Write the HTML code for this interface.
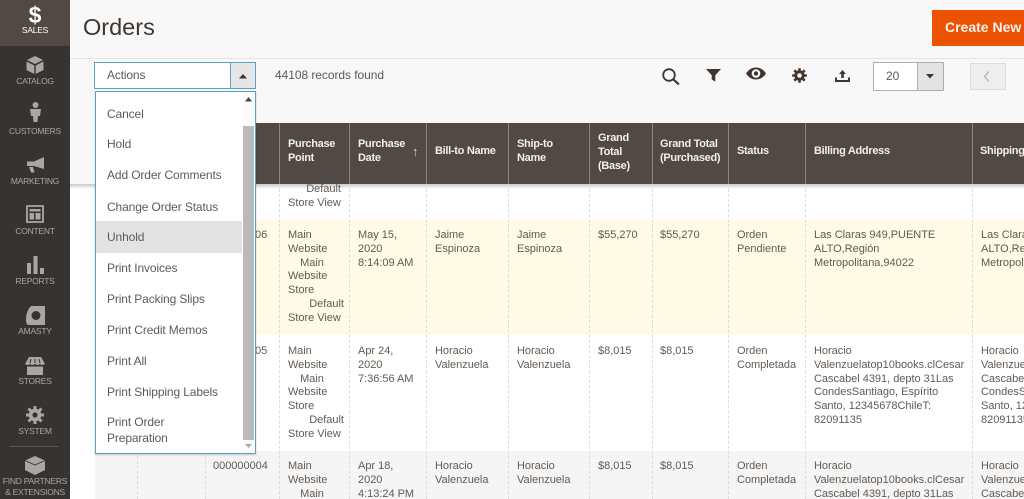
<!DOCTYPE html>
<html><head><meta charset="utf-8"><style>
html,body{margin:0;padding:0;width:1024px;height:499px;overflow:hidden;background:#fff}
body{position:relative;font-family:"Liberation Sans",sans-serif;color:#41362f}
div{position:absolute;box-sizing:border-box}
svg{position:absolute;overflow:visible}
.t{font-size:11px;line-height:13.75px;white-space:pre;color:#635a53;letter-spacing:-.02px}
.h{font-size:11px;line-height:13.5px;white-space:pre;color:#f3efe8;font-weight:bold;letter-spacing:-.3px}
.v{width:0;border-left:1px solid #8a837e;top:123px;height:61px}
.d{width:0;border-left:1px dashed #dcdcdc;top:184px;height:315px}
.n{left:0;width:70px;text-align:center;font-size:8.5px;color:#aaa6a0;white-space:pre;line-height:11px;letter-spacing:-.25px}
.m{left:107px;font-size:12px;color:#5f5a55;white-space:pre;line-height:16px;letter-spacing:-.12px}
</style></head><body>
<!-- page top -->
<div style="left:70px;top:0;width:954px;height:184px;background:#f8f8f8"></div>
<div style="left:70px;top:58px;width:954px;height:1px;background:#e6e6e6"></div>
<div style="left:83px;top:12px;font-size:23.5px;line-height:30px;color:#41362f;letter-spacing:0">Orders</div>
<div style="left:932px;top:10px;width:92px;height:36px;background:#eb5202"></div>
<div style="left:945px;top:19px;font-size:14px;line-height:17px;font-weight:bold;color:#fff;white-space:pre;letter-spacing:0;opacity:.93">Create New</div>

<!-- rows -->
<div style="left:95px;top:220px;width:929px;height:115px;background:#fffbe6"></div>
<div style="left:95px;top:451px;width:929px;height:48px;background:#f5f5f5"></div>
<div style="left:95px;top:123px;width:929px;height:61px;background:#514943"></div>
<div style="left:70px;top:184px;width:954px;height:5px;background:linear-gradient(#c9c9c9,#fff)"></div>
<div class="v" style="left:279px"></div><div class="v" style="left:349px"></div><div class="v" style="left:426px"></div><div class="v" style="left:508px"></div><div class="v" style="left:589px"></div><div class="v" style="left:652px"></div><div class="v" style="left:728px"></div><div class="v" style="left:805px"></div><div class="v" style="left:972px"></div>
<div class="d" style="left:137px"></div><div class="d" style="left:205px"></div><div class="d" style="left:279px"></div><div class="d" style="left:349px"></div><div class="d" style="left:426px"></div><div class="d" style="left:508px"></div><div class="d" style="left:589px"></div><div class="d" style="left:652px"></div><div class="d" style="left:728px"></div><div class="d" style="left:805px"></div><div class="d" style="left:972px"></div>

<!-- headers -->
<div class="h" style="left:288px;top:138px">Purchase
Point</div>
<div class="h" style="left:358px;top:138px">Purchase
Date</div>
<div class="t" style="left:412px;top:145px;color:#d8d3cd;font-size:13px">↑</div>
<div class="h" style="left:435px;top:145px">Bill-to Name</div>
<div class="h" style="left:517px;top:138px">Ship-to
Name</div>
<div class="h" style="left:598px;top:131px;line-height:14px">Grand
Total
(Base)</div>
<div class="h" style="left:660px;top:138px">Grand Total
(Purchased)</div>
<div class="h" style="left:737px;top:145px">Status</div>
<div class="h" style="left:814px;top:145px">Billing Address</div>
<div class="h" style="left:980px;top:145px">Shipping</div>

<!-- row 0 tail -->
<div class="t" style="left:288px;top:183px">      Default
Store View</div>
<!-- row 1 -->
<div class="t" style="left:255px;top:229px">06</div>
<div class="t" style="left:288px;top:229px">Main
Website
    Main
Website
Store
       Default
Store View</div>
<div class="t" style="left:358px;top:229px">May 15,
2020
8:14:09 AM</div>
<div class="t" style="left:435px;top:229px">Jaime
Espinoza</div>
<div class="t" style="left:517px;top:229px">Jaime
Espinoza</div>
<div class="t" style="left:598px;top:229px">$55,270</div>
<div class="t" style="left:660px;top:229px">$55,270</div>
<div class="t" style="left:737px;top:229px">Orden
Pendiente</div>
<div class="t" style="left:814px;top:229px">Las Claras 949,PUENTE
ALTO,Región
Metropolitana,94022</div>
<div class="t" style="left:981px;top:229px">Las Claras
ALTO,Reg
Metropol</div>
<!-- row 2 -->
<div class="t" style="left:255px;top:345px">05</div>
<div class="t" style="left:288px;top:345px">Main
Website
    Main
Website
Store
       Default
Store View</div>
<div class="t" style="left:358px;top:345px">Apr 24,
2020
7:36:56 AM</div>
<div class="t" style="left:435px;top:345px">Horacio
Valenzuela</div>
<div class="t" style="left:517px;top:345px">Horacio
Valenzuela</div>
<div class="t" style="left:598px;top:345px">$8,015</div>
<div class="t" style="left:660px;top:345px">$8,015</div>
<div class="t" style="left:737px;top:345px">Orden
Completada</div>
<div class="t" style="left:814px;top:345px">Horacio
Valenzuelatop10books.clCesar
Cascabel 4391, depto 31Las
CondesSantiago, Espírito
Santo, 12345678ChileT:
82091135</div>
<div class="t" style="left:981px;top:345px">Horacio
Valenzue
Cascabel
CondesSa
Santo, 12
82091135</div>
<!-- row 3 -->
<div class="t" style="left:213px;top:460px">000000004</div>
<div class="t" style="left:288px;top:460px">Main
Website
    Main</div>
<div class="t" style="left:358px;top:460px">Apr 18,
2020
4:13:24 PM</div>
<div class="t" style="left:435px;top:460px">Horacio
Valenzuela</div>
<div class="t" style="left:517px;top:460px">Horacio
Valenzuela</div>
<div class="t" style="left:598px;top:460px">$8,015</div>
<div class="t" style="left:660px;top:460px">$8,015</div>
<div class="t" style="left:737px;top:460px">Orden
Completada</div>
<div class="t" style="left:814px;top:460px">Horacio
Valenzuelatop10books.clCesar
Cascabel 4391, depto 31Las</div>
<div class="t" style="left:981px;top:460px">Horacio
Valenzue
Cascabel</div>

<!-- toolbar -->
<div style="left:275px;top:68px;font-size:12px;line-height:15px;color:#5f5a55;letter-spacing:-.06px">44108 records found</div>
<svg style="left:661px;top:67px" width="20" height="20" viewBox="0 0 20 20"><circle cx="8" cy="8" r="5.800" fill="none" stroke="#41362f" stroke-width="1.800"/><path d="M12.300 12.300L17.800 17.400" stroke="#41362f" stroke-width="2.200"/></svg>
<svg style="left:706px;top:69px" width="15" height="13" viewBox="0 0 15 13"><path d="M0 0H15L9.300 6.200V12.600L5.700 10.400V6.200Z" fill="#41362f"/></svg>
<svg style="left:746px;top:67px" width="20" height="13" viewBox="0 0 20 13"><path fill-rule="evenodd" d="M0 6.500C3 2 6.500 .5 10 .5S17 2 20 6.500C17 11 13.500 12.500 10 12.500S3 11 0 6.500ZM10 2.200A4.300 4.300 0 1 0 10 10.800A4.300 4.300 0 1 0 10 2.200Z" fill="#41362f"/><circle cx="10" cy="6.500" r="2.200" fill="#41362f"/></svg>
<svg style="left:792px;top:68px" width="15" height="15" viewBox="0 0 15 15"><path d="M7.500 .2V14.800M.2 7.500H14.800M2.300 2.300L12.700 12.700M12.700 2.300L2.300 12.700" stroke="#41362f" stroke-width="2.600"/><circle cx="7.500" cy="7.500" r="5.200" fill="#41362f"/><circle cx="7.500" cy="7.500" r="2.300" fill="#f8f8f8"/></svg>
<svg style="left:835px;top:70px" width="15" height="13" viewBox="0 0 15 13"><path d="M7.500 0L11 4H8.800V8H6.200V4H4Z" fill="#41362f"/><path d="M1 7.500V11H14V7.500" fill="none" stroke="#41362f" stroke-width="2"/></svg>
<div style="left:873px;top:62px;width:71px;height:29px;background:#fff;border:1px solid #adadad;border-radius:1px"></div>
<div style="left:917px;top:63px;width:26px;height:27px;background:#e3e3e3;border-left:1px solid #adadad"></div>
<div style="left:886px;top:69px;font-size:12px;line-height:15px;color:#5f5a55">20</div>
<svg style="left:926px;top:74px" width="8" height="5"><path d="M0 0H8L4 4.500Z" fill="#41362f"/></svg>
<div style="left:970px;top:63px;width:36px;height:27px;background:#eee;border:1px solid #dcdcdc"></div>
<svg style="left:983px;top:71px" width="8" height="11"><path d="M6 .5L1.500 5.500L6 10.500" fill="none" stroke="#b5b2ae" stroke-width="1.300"/></svg>

<!-- Actions select -->
<div style="left:94px;top:62px;width:162px;height:27px;background:#fff;border:1px solid #5a9fc8"></div>
<div style="left:230px;top:63px;width:25px;height:25px;background:#e6e6e6;border-left:1px solid #5a9fc8"></div>
<div style="left:107px;top:68px;font-size:12px;line-height:15px;color:#5f5a55;letter-spacing:-.15px">Actions</div>
<svg style="left:239px;top:74px" width="8" height="5"><path d="M0 4.500H8L4 0Z" fill="#41362f"/></svg>

<!-- dropdown -->
<div style="left:95px;top:91px;width:161px;height:363px;background:#fff;border:1px solid #5a9fc8;box-shadow:0 1px 2px rgba(0,0,0,.2)"></div>
<div style="left:96px;top:221px;width:146px;height:32px;background:#e3e3e3"></div>
<div style="left:243px;top:92px;width:12px;height:361px;background:#fbfbfb"></div>
<div style="left:243px;top:126px;width:11px;height:314px;background:#bcbab8"></div>
<svg style="left:245px;top:97px" width="7" height="5"><path d="M0 4.500H7L3.500 0Z" fill="#444"/></svg>
<svg style="left:245px;top:444px" width="7" height="4"><path d="M0 0H7L3.500 4Z" fill="#aaa"/></svg>
<div class="m" style="top:106px">Cancel</div>
<div class="m" style="top:136px">Hold</div>
<div class="m" style="top:167px">Add Order Comments</div>
<div class="m" style="top:199px">Change Order Status</div>
<div class="m" style="top:229px">Unhold</div>
<div class="m" style="top:260px">Print Invoices</div>
<div class="m" style="top:291px">Print Packing Slips</div>
<div class="m" style="top:322px">Print Credit Memos</div>
<div class="m" style="top:353px">Print All</div>
<div class="m" style="top:384px">Print Shipping Labels</div>
<div class="m" style="top:414px">Print Order
Preparation</div>

<!-- sidebar -->
<div style="left:0;top:0;width:70px;height:499px;background:#373330"></div>
<div style="left:0;top:0;width:70px;height:46px;background:#514943"></div>
<div style="left:0;top:3px;width:70px;text-align:center;font-size:23px;line-height:24px;font-weight:bold;color:#fff">$</div>
<div class="n" style="top:25px;color:#fff">SALES</div>
<svg style="left:26px;top:56px" width="18" height="18" viewBox="0 0 18 18"><path d="M9 0L17 4L9 8L1 4ZM.5 5.500L8.300 9.500V18L.5 14ZM17.500 5.500L9.700 9.500V18L17.500 14Z" fill="#aaa6a0"/></svg>
<div class="n" style="top:75.500px">CATALOG</div>
<svg style="left:29px;top:102px" width="13" height="20" viewBox="0 0 13 20"><circle cx="6.500" cy="3" r="3" fill="#aaa6a0"/><path d="M1 7H12L11 14H9L8.500 20H4.500L4 14H2Z" fill="#aaa6a0"/></svg>
<div class="n" style="top:125.500px">CUSTOMERS</div>
<svg style="left:26px;top:157px" width="18" height="16" viewBox="0 0 18 16"><path d="M18 0V12L8 9H1V4.500H8ZM3 10H7L8.500 15.500H5Z" fill="#aaa6a0"/></svg>
<div class="n" style="top:175.500px">MARKETING</div>
<svg style="left:26px;top:205px" width="18" height="18" viewBox="0 0 18 18"><path d="M1 1H17V17H1Z" fill="none" stroke="#aaa6a0" stroke-width="1.800"/><path d="M3.500 4H14.500V6.500H3.500ZM3.500 8H8V14.500H3.500ZM9.500 8H14.500V14.500H9.500Z" fill="#aaa6a0"/></svg>
<div class="n" style="top:225.500px">CONTENT</div>
<svg style="left:26px;top:256px" width="18" height="18" viewBox="0 0 18 18"><path d="M1 7H5V18H1ZM7.500 0H11.500V18H7.500ZM14 12H18V18H14Z" fill="#aaa6a0"/></svg>
<div class="n" style="top:275.500px">REPORTS</div>
<svg style="left:26px;top:306px" width="19" height="19" viewBox="0 0 19 19"><path fill-rule="evenodd" d="M5 0H19V19H3Q0 19 0 14Q0 5 5 0ZM10 5A4.500 4.500 0 1 0 10 14A4.500 4.500 0 1 0 10 5Z" fill="#aaa6a0"/></svg>
<div class="n" style="top:325.500px">AMASTY</div>
<svg style="left:25px;top:357px" width="20" height="18" viewBox="0 0 20 18"><path d="M4 0H16L20 7Q17 9 15 7Q13 9 10 7Q7 9 5 7Q3 9 0 7ZM2 9.500H18V18H2Z" fill="#aaa6a0"/><path d="M6 2L5 6M10 2V6M14 2L15 6" stroke="#373330" stroke-width="1"/></svg>
<div class="n" style="top:375.500px">STORES</div>
<svg style="left:26px;top:406px" width="18" height="18" viewBox="0 0 18 18"><path d="M9 0V18M0 9H18M2.500 2.500L15.500 15.500M15.500 2.500L2.500 15.500" stroke="#aaa6a0" stroke-width="3"/><circle cx="9" cy="9" r="6.300" fill="#aaa6a0"/><circle cx="9" cy="9" r="2.600" fill="#373330"/></svg>
<div class="n" style="top:425.500px">SYSTEM</div>
<div style="left:10px;top:446px;width:49px;height:1px;background:#5a5552"></div>
<svg style="left:25px;top:456px" width="20" height="19" viewBox="0 0 20 19"><path d="M10 0L20 4.500V14L10 19L0 14V4.500Z" fill="#aaa6a0"/><path d="M0 4.500L10 9L20 4.500" fill="none" stroke="#373330" stroke-width=".8"/></svg>
<div class="n" style="top:476px">FIND PARTNERS
&amp; EXTENSIONS</div>
</body></html>
